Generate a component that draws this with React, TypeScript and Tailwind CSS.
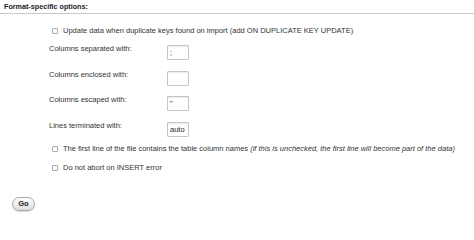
import React from "react";

const Check: React.FC = () => (
	<span className="inline-block w-[6px] h-[6px] border border-[#a9a9a9] rounded-[1px] bg-white shrink-0" />
);

const fields = [
	{ label: "Columns separated with:", value: ";", mt: "mt-[8px]" },
	{ label: "Columns enclosed with:", value: "", mt: "mt-[10px]" },
	{ label: "Columns escaped with:", value: "\"", mt: "mt-[9px]" },
	{ label: "Lines terminated with:", value: "auto", mt: "mt-[10px]" },
];

const App: React.FC = () => {
	return (
		<div
			className="w-[474px] h-[220px] bg-white text-[#333] text-[7.5px] overflow-hidden"
			style={{ fontFamily: '"Liberation Sans", Arial, sans-serif' }}
		>
			<div className="h-[14px] leading-[14px] pl-[4px] text-[7.2px] font-bold text-[#222] border-b border-[#c8c8c8]">
				Format-specific options:
			</div>

			<div className="mt-[12px] h-[10px] flex items-center pl-[52px] whitespace-nowrap">
				<Check />
				<span className="ml-[5px] leading-[10px]">
					Update data when duplicate keys found on import (add ON
					DUPLICATE KEY UPDATE)
				</span>
			</div>

			{fields.map((f) => (
				<div key={f.label} className={`${f.mt} flex items-start pl-[49px] h-[16px]`}>
					<span className="w-[118px] leading-[10px]">{f.label}</span>
					<div className="mt-[1px] w-[22px] h-[15px] border border-[#c6c6c6] rounded-[1px] bg-white shadow-[inset_0_1px_1px_rgba(0,0,0,0.08)] pl-[2px] leading-[13px] text-[#222]">
						{f.value}
					</div>
				</div>
			))}

			<div className="mt-[7px] h-[10px] flex items-center pl-[52px] whitespace-nowrap">
				<Check />
				<span className="ml-[5px] leading-[10px]">
					The first line of the file contains the table column names{" "}
					<i>(if this is unchecked, the first line will become part of the data)</i>
				</span>
			</div>

			<div className="mt-[9px] h-[10px] flex items-center pl-[52px] whitespace-nowrap">
				<Check />
				<span className="ml-[5px] leading-[10px]">Do not abort on INSERT error</span>
			</div>

			<button className="mt-[24px] ml-[12px] w-[23px] h-[14px] rounded-full border border-[#aaa] bg-gradient-to-b from-white to-[#dcdcdc] shadow-[0_1px_1px_rgba(0,0,0,0.15)] text-[7.5px] font-bold text-[#222] leading-[12px] flex items-center justify-center">
				Go
			</button>
		</div>
	);
};

export default App;
